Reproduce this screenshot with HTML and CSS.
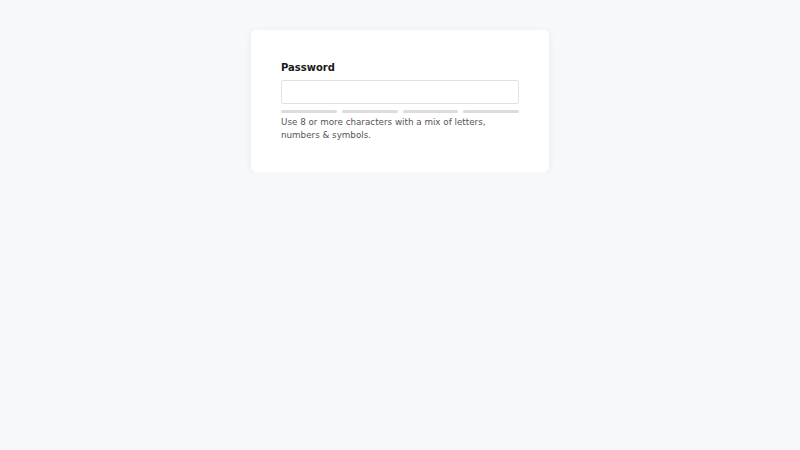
FILE: index.html
```html
<!DOCTYPE html>
<html lang="en">
<head>
<meta charset="utf-8">
<title>Password</title>
<link rel="stylesheet" href="styles.css">
</head>
<body>
  <main class="page">
    <form class="card">
      <label class="label" for="pw">Password</label>
      <input class="input" id="pw" type="password">
      <div class="meter">
        <span class="bar"></span>
        <span class="bar"></span>
        <span class="bar"></span>
        <span class="bar"></span>
      </div>
      <p class="hint">Use 8 or more characters with a mix of letters, numbers &amp; symbols.</p>
    </form>
  </main>
</body>
</html>
```
FILE: styles.css
```css
html, body {
  margin: 0;
  padding: 0;
  background: #f7f8fa;
  font-family: "DejaVu Sans", sans-serif;
}
.page {
  display: flex;
  justify-content: center;
  padding-top: 30px;
}
.card {
  width: 238px;
  padding: 30px;
  background: #ffffff;
  border-radius: 5px;
  box-shadow: 0 2px 8px rgba(20, 30, 50, 0.06);
  display: flex;
  flex-direction: column;
  margin: 0;
}
.label {
  font-size: 10px;
  font-weight: bold;
  line-height: 15px;
  color: #1a1a1a;
  margin-bottom: 5px;
}
.input {
  box-sizing: border-box;
  height: 24px;
  width: 100%;
  margin: 0;
  padding: 0 6px;
  border: 1px solid #e2e2e2;
  border-radius: 2px;
  background: #fff;
  outline: none;
}
.meter {
  display: flex;
  gap: 5px;
  margin-top: 6px;
}
.bar {
  flex: 1;
  height: 3px;
  border-radius: 2px;
  background: #dcdcdc;
}
.hint {
  margin: 3px 0 0;
  font-size: 8.75px;
  line-height: 13px;
  color: #555;
}
```
